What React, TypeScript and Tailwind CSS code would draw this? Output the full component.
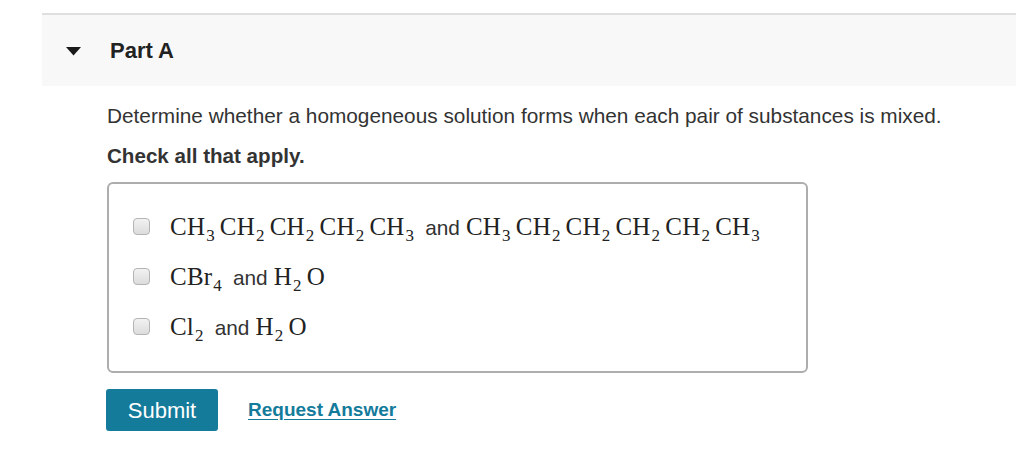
import React from "react";

const serif = { fontFamily: '"Liberation Serif", "Times New Roman", serif' };

// formula like "CH_3CH_2" -> letters with subscripts
function Formula({ f }: { f: string }) {
  const parts: React.ReactNode[] = [];
  const re = /([^_]+?)(?:_(\d))?(?=$|[A-Z]|_)/g;
  let m: RegExpExecArray | null;
  let i = 0;
  while ((m = re.exec(f)) !== null) {
    if (!m[0]) break;
    parts.push(
      <span key={i++}>
        {m[1]}
        {m[2] && (
          <sub className="relative top-[6px] mr-[5px] ml-[1px] align-baseline text-[17px] leading-none">{m[2]}</sub>
        )}
      </span>
    );
  }
  return (
    <span className="text-[25px] leading-none tracking-[0.2px] text-[#222]" style={serif}>
      {parts}
    </span>
  );
}

function Option({ a, b }: { a: string; b: string }) {
  return (
    <label className="flex h-[50px] items-center">
      <span className="mr-[20px] h-[17px] w-[17px] shrink-0 rounded-[4px] border border-[#b4b4b4] bg-gradient-to-b from-[#f2f2f2] to-[#dcdcdc]" />
      <span className="whitespace-nowrap leading-none">
        <Formula f={a} />
        <span className="mx-[6px] text-[20.8px] text-[#333]">and</span>
        <Formula f={b} />
      </span>
    </label>
  );
}

export default function App() {
  return (
    <div
      className="h-[470px] w-[1016px] bg-white text-[#333]"
      style={{ fontFamily: '"Liberation Sans", Arial, Helvetica, sans-serif' }}
    >
      <div className="pt-[13px] pl-[42px]">
        <div className="border-t-2 border-[#dfdfdf] bg-[#f8f8f8]">
          <div className="flex h-[71px] items-center">
            <svg width="15" height="9" viewBox="0 0 15 9" className="ml-[24px] mr-[29px] mt-[2px]">
              <path d="M0 0 H15 L7.5 8.5 Z" fill="#1a1a1a" />
            </svg>
            <h2 className="text-[22px] font-bold text-[#222]">Part A</h2>
          </div>
        </div>
        <div className="pl-[65px]">
          <p className="mt-[17px] text-[20.8px] leading-[26px]">
            Determine whether a homogeneous solution forms when each pair of substances is mixed.
          </p>
          <p className="mt-[14px] text-[20.6px] font-bold leading-[26px]">Check all that apply.</p>
          <div className="mt-[13px] w-[701px] rounded-[6px] border-2 border-[#adadad] px-[24px] pt-[17px] pb-[20px]">
            <Option a="CH_3CH_2CH_2CH_2CH_3" b="CH_3CH_2CH_2CH_2CH_2CH_3" />
            <Option a="CBr_4" b="H_2O" />
            <Option a="Cl_2" b="H_2O" />
          </div>
          <div className="mt-[16px] flex items-center">
            <button className="-ml-[1px] h-[42px] w-[112px] rounded-[3px] bg-[#147b9b] text-[22px] text-white">
              Submit
            </button>
            <a className="ml-[30px] text-[19px] font-bold text-[#147b9b] underline underline-offset-[3px]" href="#">
              Request Answer
            </a>
          </div>
        </div>
      </div>
    </div>
  );
}
